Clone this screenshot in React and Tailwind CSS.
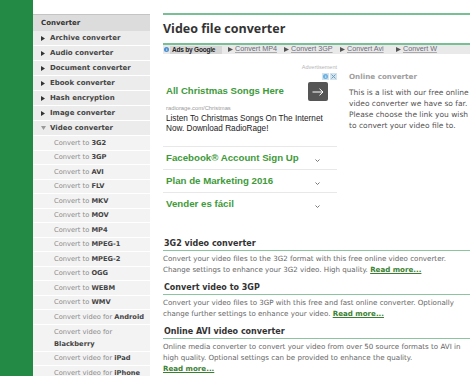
import React from "react";

const Tri = () => (
  <svg width="4" height="5" viewBox="0 0 4 5" className="shrink-0">
    <polygon points="0,0 4,2.5 0,5" fill="#333" />
  </svg>
);
const TriDown = () => (
  <svg width="5" height="4" viewBox="0 0 5 4" className="shrink-0">
    <polygon points="0,0 5,0 2.5,4" fill="#9a9a9a" />
  </svg>
);
const LinkTri = () => (
  <svg width="5" height="5" viewBox="0 0 5 5" className="shrink-0 mr-[2px]">
    <polygon points="0,0 5,2.5 0,5" fill="#555" />
  </svg>
);

const top = [
  "Archive converter",
  "Audio converter",
  "Document converter",
  "Ebook converter",
  "Hash encryption",
  "Image converter",
];

const subs = [
  ["Convert to ", "3G2"],
  ["Convert to ", "3GP"],
  ["Convert to ", "AVI"],
  ["Convert to ", "FLV"],
  ["Convert to ", "MKV"],
  ["Convert to ", "MOV"],
  ["Convert to ", "MP4"],
  ["Convert to ", "MPEG-1"],
  ["Convert to ", "MPEG-2"],
  ["Convert to ", "OGG"],
  ["Convert to ", "WEBM"],
  ["Convert to ", "WMV"],
  ["Convert video for ", "Android"],
];

function SubRow({ a, b }) {
  return (
    <div className="h-[14.5px] border-b border-white bg-[#f3f3f3] flex items-center pl-[21px] text-[6.7px] text-[#8a8a8a]">
      <span>
        {a}
        <span className="font-bold text-[#444]">{b}</span>
      </span>
    </div>
  );
}

function Sidebar() {
  return (
    <div className="w-[117px] shrink-0 pt-[14px]">
      <div className="border-t border-[#c4c4c4] bg-[#dcdcdc] h-[17px] flex items-center pl-[8px] text-[7px] font-bold text-[#333]">
        Converter
      </div>
      {top.map((t) => (
        <div
          key={t}
          className="h-[15px] border-b border-white bg-[#ececec] flex items-center pl-[8px] text-[7px] font-bold text-[#444]"
        >
          <Tri />
          <span className="ml-[5px]">{t}</span>
        </div>
      ))}
      <div className="h-[15px] border-b border-white bg-[#ececec] flex items-center pl-[8px] text-[7px] font-bold text-[#444]">
        <TriDown />
        <span className="ml-[4px]">Video converter</span>
      </div>
      {subs.map(([a, b]) => (
        <SubRow key={b} a={a} b={b} />
      ))}
      <div className="h-[27px] border-b border-white bg-[#f3f3f3] flex flex-col justify-center pl-[21px] text-[6.7px] leading-[12px] text-[#8a8a8a]">
        <span>Convert video for</span>
        <span className="font-bold text-[#444]">Blackberry</span>
      </div>
      <SubRow a="Convert video for " b="iPad" />
      <SubRow a="Convert video for " b="iPhone" />
    </div>
  );
}

function AdBar() {
  return (
    <div className="border-t-2 border-[#79bf95] bg-[#e9e9e9] h-[11px] flex items-center font-['Liberation_Sans',sans-serif] text-[7.2px]">
      <div className="w-[5px] h-[5px] rounded-full bg-[#4a8fd0] ml-[1px] flex items-center justify-center text-white text-[4px] font-bold leading-none">
        i
      </div>
      <div className="ml-[1px] bg-[#d6d6d6] px-[2px] h-[8px] flex items-center font-bold text-[#222] text-[6.5px] tracking-[-0.2px] w-[52px]">
        Ads by Google
      </div>
      <div className="flex items-center ml-[6px] text-[#6a6a7a]">
        {["Convert MP4", "Convert 3GP", "Convert Avi", "Convert W"].map((t) => (
          <div key={t} className="flex items-center w-[56px]">
            <LinkTri />
            <span className="underline decoration-[#aaa]">{t}</span>
          </div>
        ))}
      </div>
    </div>
  );
}

function Chevron() {
  return (
    <svg width="5" height="3" viewBox="0 0 5 3">
      <polyline points="0.5,0.5 2.5,2.5 4.5,0.5" fill="none" stroke="#777" strokeWidth="1" />
    </svg>
  );
}

function AdBlock() {
  return (
    <div className="w-[174px] shrink-0 pt-[10px] font-['Liberation_Sans',sans-serif]">
      <div className="h-[6px] leading-[6px] text-[5.5px] text-[#b5b5b5] text-right">Advertisement</div>
      <div className="mt-[3px] h-[7px] flex justify-end gap-[1px]">
        <div className="w-[7px] h-[7px] bg-[#d4e4ef] flex items-center justify-center">
          <div className="w-[5px] h-[5px] rounded-full bg-[#6aaee0] text-white text-[4px] leading-[5px] text-center font-bold">i</div>
        </div>
        <div className="w-[7px] h-[7px] bg-[#d4e4ef] flex items-center justify-center">
          <svg width="5" height="5" viewBox="0 0 5 5">
            <path d="M0.5 0.5 L4.5 4.5 M4.5 0.5 L0.5 4.5" stroke="#6a9fc0" strokeWidth="1" />
          </svg>
        </div>
      </div>
      <div className="mt-[2px] h-[19px] flex items-center justify-between pl-[3px] pr-[9px]">
        <span className="text-[9.6px] font-bold text-[#3e9a3a]">All Christmas Songs Here</span>
        <div className="w-[20px] h-[19px] rounded-[2px] bg-[#555] flex items-center justify-center">
          <svg width="12" height="8" viewBox="0 0 12 8">
            <path d="M0.5 4 H11 M7.5 0.7 L11 4 L7.5 7.3" fill="none" stroke="#fff" strokeWidth="1" />
          </svg>
        </div>
      </div>
      <div className="mt-[3px] h-[8px] leading-[8px] pl-[3px] text-[5.8px] text-[#9a9a9a]">radiorage.com/Christmas</div>
      <div className="mt-[2px] pl-[3px] text-[8.2px] leading-[10px] text-[#222]">
        Listen To Christmas Songs On The Internet
        <br />
        Now. Download RadioRage!
      </div>
      <div className="mt-[12px] border-t border-[#e8e8e8]">
        {["Facebook® Account Sign Up", "Plan de Marketing 2016", "Vender es fácil"].map((t, i) => (
          <div
            key={t}
            className={
              "h-[23px] flex items-center justify-between pl-[3px] pr-[17px] " +
              (i < 2 ? "border-b border-[#e8e8e8]" : "")
            }
          >
            <span className="text-[9.7px] font-bold text-[#3e9a3a]">{t}</span>
            <div className="mt-[4px]">
              <Chevron />
            </div>
          </div>
        ))}
      </div>
    </div>
  );
}

function Section({ title, children }) {
  return (
    <div>
      <div className="h-[13px] flex items-center border-b border-[#8cc4a0] text-[8px] font-bold text-[#333] pl-[1px]">
        {title}
      </div>
      <div className="mt-[2px] text-[7.1px] leading-[11px] text-[#666]">{children}</div>
    </div>
  );
}

const Read = () => (
  <span className="inline-block font-bold text-[#3a7f30] underline leading-[11px]">Read more...</span>
);

function Main() {
  return (
    <div className="flex-1 pl-[13px] pr-[4px] pt-[13px] min-w-0">
      <div className="h-[2px] bg-[#79bf95]" />
      <div className="h-[28px] flex items-center font-['Open_Sans',sans-serif] font-bold text-[12.5px] text-[#333]">
        Video file converter
      </div>
      <AdBar />
      <div className="flex">
        <AdBlock />
        <div className="ml-[12px] flex-1 min-w-0">
          <div className="mt-[18px] h-[10px] flex items-center text-[7.2px] font-bold text-[#a0a0a0]">Online converter</div>
          <div className="mt-[5px] text-[7.5px] leading-[11px] text-[#555]">
            This is a list with our free online video converter we have so far. Please choose the link you wish to convert your video file to.
          </div>
        </div>
      </div>
      <div className="mt-[22px] flex flex-col gap-[7px]">
        <Section title="3G2 video converter">
          Convert your video files to the 3G2 format with this free online video converter. Change settings to enhance your 3G2 video. High quality. <Read />
        </Section>
        <Section title="Convert video to 3GP">
          Convert your video files to 3GP with this free and fast online converter. Optionally change further settings to enhance your video. <Read />
        </Section>
        <Section title="Online AVI video converter">
          Online media converter to convert your video from over 50 source formats to AVI in high quality. Optional settings can be provided to enhance the quality.
          <br />
          <Read />
        </Section>
      </div>
    </div>
  );
}

export default function App() {
  return (
    <div className="w-[474px] h-[376px] overflow-hidden flex bg-white font-['DejaVu_Sans',sans-serif]">
      <div className="w-[33px] shrink-0 bg-[#238a45]" />
      <Sidebar />
      <Main />
    </div>
  );
}
